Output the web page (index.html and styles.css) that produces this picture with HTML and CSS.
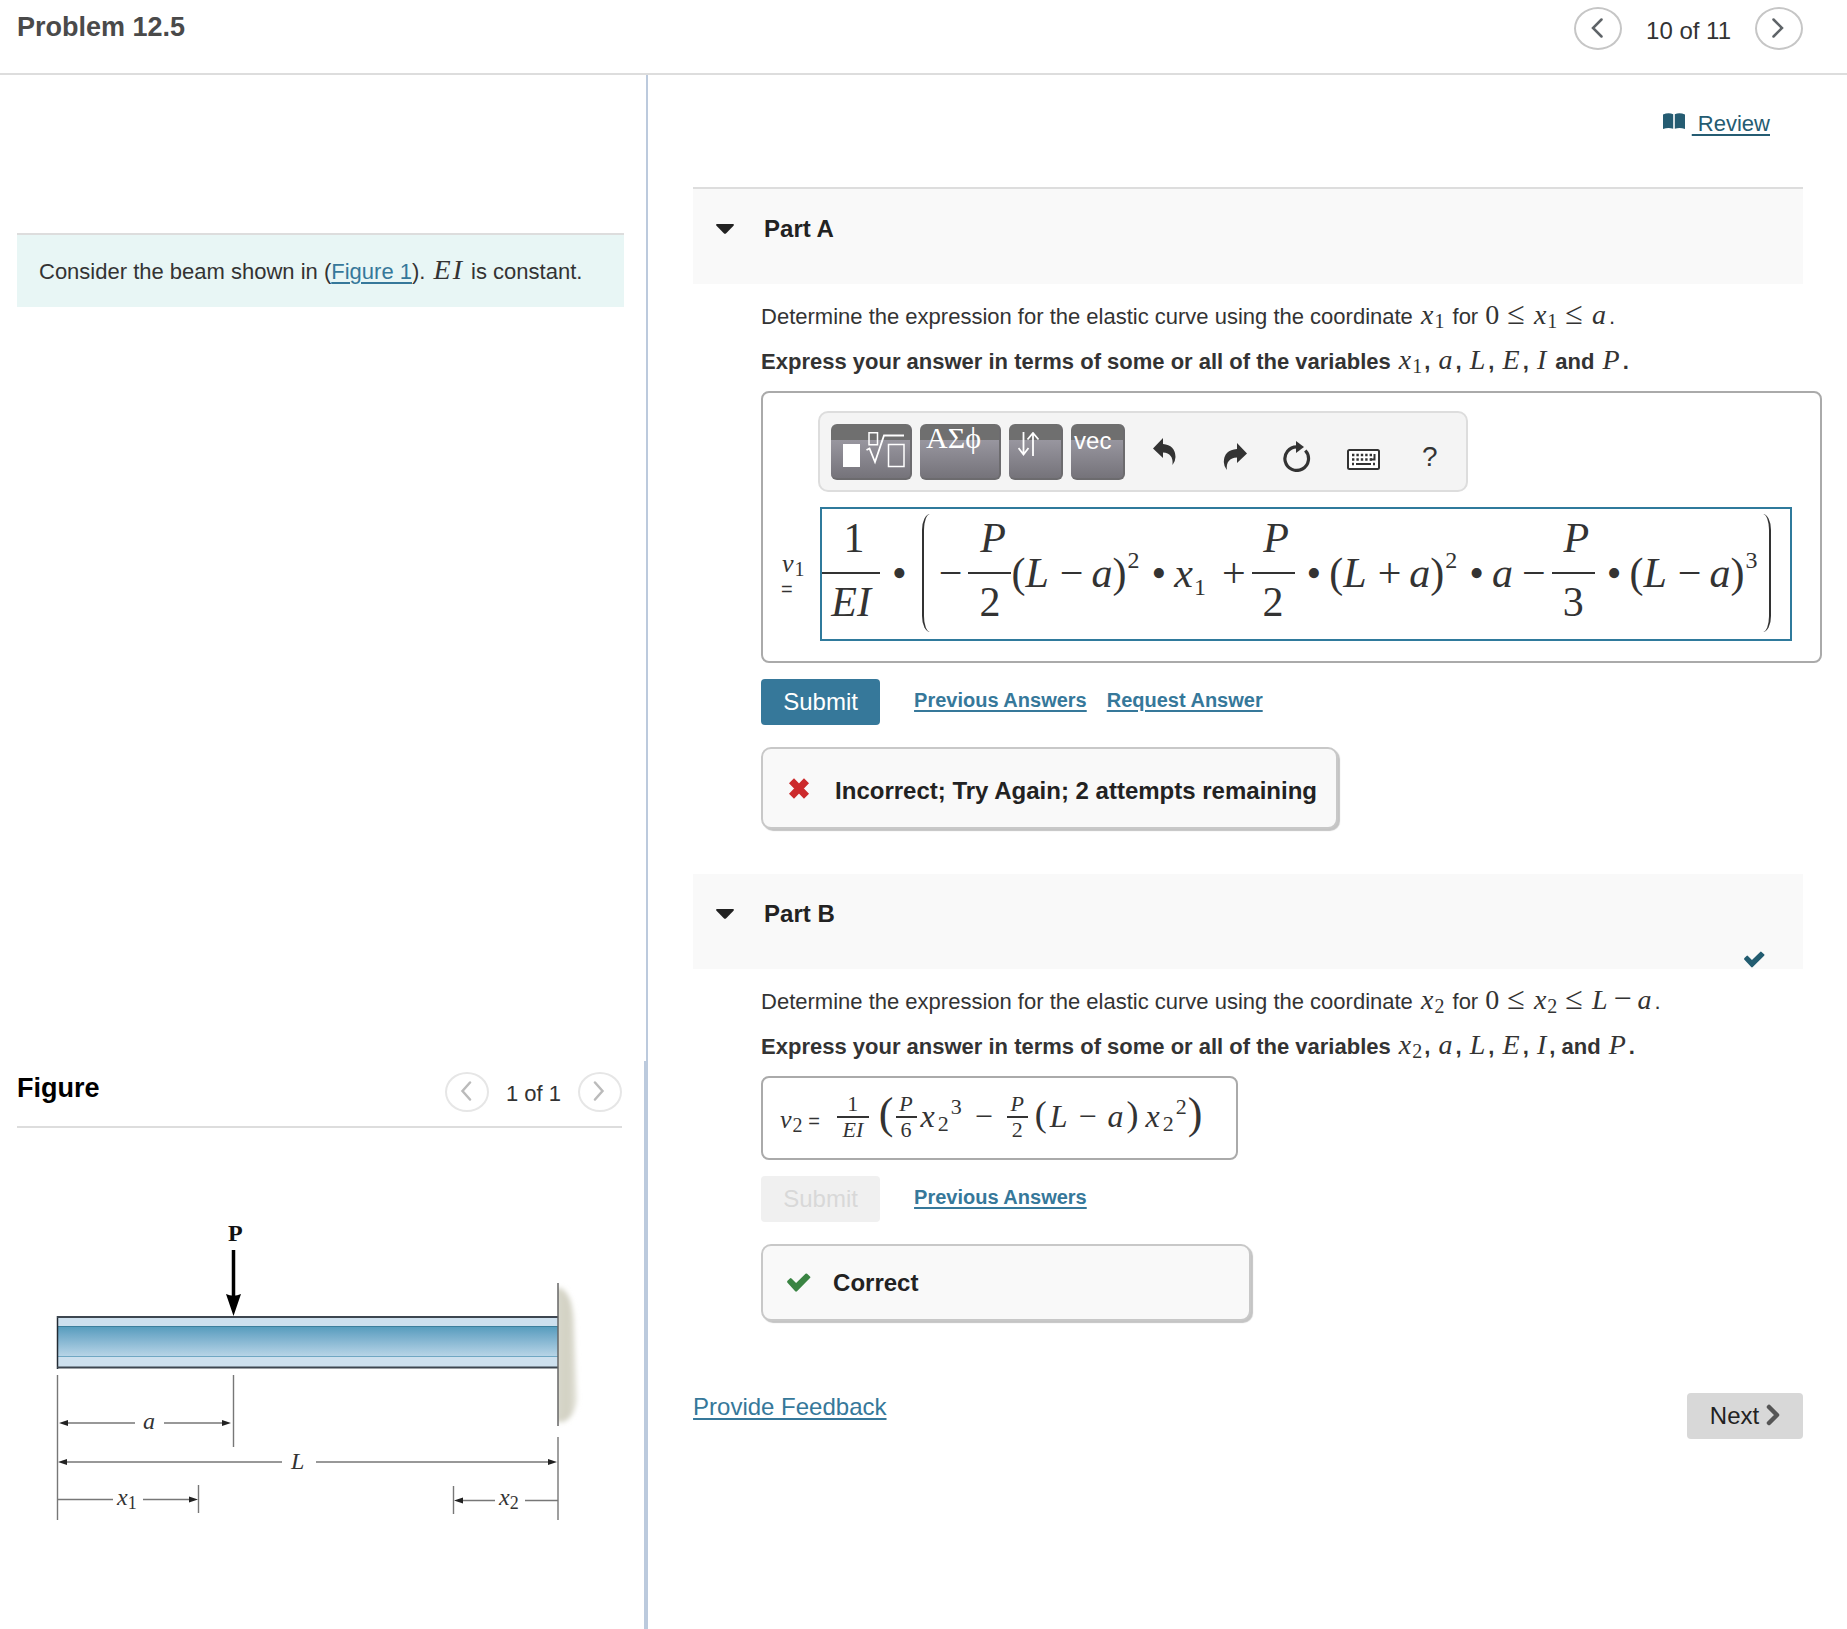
FILE: index.html
```html
<!DOCTYPE html>
<html lang="en">
<head>
<meta charset="utf-8">
<title>Problem 12.5</title>
<link rel="stylesheet" href="styles.css">
</head>
<body>
<header class="topbar">
  <h1 class="topbar-title">Problem 12.5</h1>
  <nav class="pager" aria-label="Problems">
    <button class="round" type="button" aria-label="Previous problem"><svg width="12" height="20" viewBox="0 0 12 20"><path d="M10.500 1.500L2 10l8.500 8.500" /></svg></button>
    <span class="pager-count">10 of 11</span>
    <button class="round" type="button" aria-label="Next problem"><svg width="12" height="20" viewBox="0 0 12 20"><path d="M1.500 1.500L10 10l-8.500 8.500" /></svg></button>
  </nav>
</header>

<div class="columns">
  <aside class="side">
    <section class="intro">
      <p class="intro-box">Consider the beam shown in (<a href="#figure">Figure 1</a>). <span class="m"><i>E</i><i>I</i></span> is constant.</p>
    </section>
    <section class="figure" id="figure">
      <div class="figure-head">
        <h2 class="figure-title">Figure</h2>
        <nav class="pager pager-small" aria-label="Figures">
          <button class="round" type="button" disabled aria-label="Previous figure"><svg width="12" height="20" viewBox="0 0 12 20"><path d="M10 1.500L2.500 10l7.500 8.500" /></svg></button>
          <span class="pager-count">1 of 1</span>
          <button class="round" type="button" disabled aria-label="Next figure"><svg width="12" height="20" viewBox="0 0 12 20"><path d="M2 1.500L9.500 10 2 18.500" /></svg></button>
        </nav>
      </div>
      <svg class="beam" width="605" height="340" viewBox="17 1200 605 340" role="img" aria-label="Beam fixed at its right end with load P">
        <defs>
          <linearGradient id="web" x1="0" y1="0" x2="0" y2="1"><stop offset="0" stop-color="#549bbb"/><stop offset=".25" stop-color="#6fa9c8"/><stop offset="1" stop-color="#bad6e8"/></linearGradient>
          <linearGradient id="wall" x1="0" y1="0" x2="1" y2="0"><stop offset="0" stop-color="#d9d8cc"/><stop offset=".6" stop-color="#d2d1c3"/><stop offset="1" stop-color="#e6e5dc"/></linearGradient>
          <filter id="soft" x="-40%" y="-10%" width="180%" height="120%"><feGaussianBlur stdDeviation="2.500"/></filter>
          <clipPath id="right"><rect x="558" y="1270" width="50" height="170"/></clipPath>
        </defs>
        <g clip-path="url(#right)"><path d="M555 1288h6q11 6 13 32l3 80q-2 16-13 22h-9z" fill="url(#wall)" filter="url(#soft)"/></g>
        <rect x="57" y="1317" width="501" height="51" fill="#cde0ee"/>
        <rect x="57" y="1326" width="501" height="31" fill="url(#web)"/>
        <path d="M57 1326.500h501" stroke="#3c7f9d"/>
        <path d="M57 1356.500h501" stroke="#6fa7c3"/>
        <path d="M57.500 1316v53" stroke="#222a33" stroke-width="1.500"/>
        <path d="M57 1317h501M57 1367.500h501" stroke="#3d4650" stroke-width="2"/>
        <path d="M558 1283v143" stroke="#666" stroke-width="1.500"/>
        <path d="M233.500 1250v50" stroke="#000" stroke-width="3.500"/>
        <path d="M226 1294q7.500 3.500 15 0l-7.500 22z"/>
        <g stroke="#777" stroke-width="1.400" fill="none">
          <path d="M57.500 1375v145M233.500 1375v72M558 1437v83M198.500 1485v28M453.500 1486v28"/>
          <path d="M62 1423h73M164 1423h64M62 1462h220M316 1462h238M57 1499.500h56M143 1499.500h50M458 1500.500h37M525 1500.500h33"/>
        </g>
        <path d="M59 1423l9-3v6zM231 1423l-9-3v6zM58 1462l9-3v6zM557 1462l-9-3v6zM198 1499.500l-9-3v6zM454 1500.500l9-3v6z" fill="#222"/>
        <g class="beam-text">
          <text x="228" y="1241" class="beam-load">P</text>
          <text x="143" y="1429">a</text>
          <text x="291" y="1469">L</text>
          <text x="117" y="1505">x<tspan class="beam-sub" dy="4">1</tspan></text>
          <text x="499" y="1505">x<tspan class="beam-sub" dy="4">2</tspan></text>
        </g>
      </svg>
    </section>
  </aside>

  <main class="work">
    <div class="review">
      <svg width="22" height="17" viewBox="0 0 22 17" aria-hidden="true"><path d="M0 1.500Q5.500-.8 10.200 1.200v14.600Q5.500 14 0 16zM22 1.500Q16.500-.8 11.800 1.200v14.600Q16.500 14 22 16z" fill="#255c72"/></svg>
      <a href="#review">&nbsp;Review</a>
    </div>

    <section>
      <h2 class="part-head part-first">
        <svg width="18" height="10" viewBox="0 0 18 10" aria-hidden="true"><path d="M1 0h16q1.500.5.500 1.700L10.200 9.300q-1.200 1-2.400 0L.5 1.700Q-.5.500 1 0z" fill="#222"/></svg>
        <span>Part A</span>
      </h2>
      <div class="part-body">
        <p>Determine the expression for the elastic curve using the coordinate <span class="m"><i>x</i><sub>1</sub></span> for <span class="m">0<b>≤</b><i>x</i><sub>1</sub><b>≤</b><i>a</i></span>.</p>
        <p class="strong">Express your answer in terms of some or all of the variables <span class="m"><i>x</i><sub>1</sub></span>, <span class="m"><i>a</i></span>, <span class="m"><i>L</i></span>, <span class="m"><i>E</i></span>, <span class="m"><i>I</i></span> and <span class="m"><i>P</i></span>.</p>

        <div class="editor">
          <div class="toolbar" role="toolbar" aria-label="Math tools">
            <button class="key key-wide" type="button" aria-label="Templates">
              <svg width="64" height="38" viewBox="0 0 64 38"><path d="M1 12h17v23H1z" fill="#fff"/><path d="M27 .8h8.500v12H27zM46.500 12.500h15.500v22H46.500z" fill="none" stroke="#fff" stroke-width="1.500"/><path d="M24.500 18l3-1.500 5.500 13.500 9-26.500h20" fill="none" stroke="#fff" stroke-width="1.800"/></svg>
            </button>
            <button class="key key-wide key-greek" type="button">ΑΣϕ</button>
            <button class="key" type="button" aria-label="Arrows">
              <svg width="24" height="26" viewBox="0 0 24 26" fill="none" stroke="#fff" stroke-width="1.800"><path d="M5.500 0v22M.5 16l5 6.500 5-6.500M15 24V1M9.500 7.500L15 1l5.500 6.500"/></svg>
            </button>
            <button class="key key-vec" type="button">vec</button>
            <div class="tools">
              <button class="tool tool-undo" type="button" aria-label="Undo"><svg width="24" height="28" viewBox="0 0 24 28"><path d="M0 10.500L10 0v6q12 1 12.500 13 0 4-3 8 1-12-9.500-12.500V20z" fill="#333"/></svg></button>
              <button class="tool" type="button" aria-label="Redo"><svg width="24" height="28" viewBox="0 0 24 28"><path d="M24 10.500L14 0v6Q1 7 .8 19q0 4 3 8-1-12 10.200-12.500V20z" fill="#333"/></svg></button>
              <button class="tool" type="button" aria-label="Reset"><svg width="28" height="31" viewBox="0 0 28 31"><path d="M22.300 9.500A11.800 11.800 0 1 1 14 5.800" fill="none" stroke="#333" stroke-width="3.200"/><path d="M13 0l8 6-8 6z" fill="#333"/></svg></button>
              <button class="tool tool-keys" type="button" aria-label="Keyboard"><svg width="33" height="21" viewBox="0 0 33 21"><rect x="1" y="1" width="31" height="19" rx="1.500" fill="#fff" stroke="#333" stroke-width="2"/><path d="M5 6h21M5 10.500h22M5 15h2M26 15h2" stroke="#333" stroke-width="2.500" stroke-dasharray="2.400 2"/><path d="M9 15h15M23 10.500h4.500V5" fill="none" stroke="#333" stroke-width="2"/></svg></button>
              <button class="tool tool-help" type="button">?</button>
            </div>
          </div>
          <div class="editor-label" id="v1"><span class="m"><i>v</i><sub>1</sub></span><br>=</div>
          <div class="field" role="textbox" tabindex="0" aria-labelledby="v1">
            <span class="frac frac-wide"><span>1</span><i>EI</i></span><span class="dot">•</span>
            <span class="fence"></span>
            <span class="op">−</span><span class="frac"><i>P</i><span>2</span></span>
            <span class="group">(<i>L</i><span class="op">−</span><i>a</i>)<sup>2</sup></span><span class="dot">•</span><i>x</i><sub>1</sub>
            <span class="op op-far">+</span><span class="frac"><i>P</i><span>2</span></span><span class="dot">•</span>
            <span class="group">(<i>L</i><span class="op">+</span><i>a</i>)<sup>2</sup></span><span class="dot">•</span><i>a</i>
            <span class="op">−</span><span class="frac"><i>P</i><span>3</span></span><span class="dot">•</span>
            <span class="group">(<i>L</i><span class="op">−</span><i>a</i>)<sup>3</sup></span>
            <span class="fence fence-end"></span>
          </div>
        </div>

        <div class="actions">
          <button class="submit" type="button">Submit</button>
          <div class="links"><a href="#answers-a">Previous Answers</a><a href="#request-a">Request Answer</a></div>
        </div>
        <div class="verdict verdict-bad">
          <svg width="24" height="23" viewBox="0 0 24 23" aria-hidden="true"><path d="M4.500 3.800l15 15.400M19.500 3.800l-15 15.400" stroke="#cc2a2c" stroke-width="7"/></svg>
          <span>Incorrect; Try Again; 2 attempts remaining</span>
        </div>
      </div>
    </section>

    <section>
      <h2 class="part-head">
        <svg width="18" height="10" viewBox="0 0 18 10" aria-hidden="true"><path d="M1 0h16q1.500.5.500 1.700L10.200 9.300q-1.200 1-2.400 0L.5 1.700Q-.5.500 1 0z" fill="#222"/></svg>
        <span>Part B</span>
        <svg class="part-done" width="21" height="17" viewBox="0 0 24 19" role="img" aria-label="Complete"><path d="M.5 7.800l2.400-2.400q.8-.8 1.600 0l4.600 4.600L18.500.8q.8-.8 1.600 0l2.900 2.700q.8.800 0 1.600L10 18.200q-.9.900-1.800 0L.5 9.800q-.8-1 0-2z" fill="#225c70"/></svg>
      </h2>
      <div class="part-body">
        <p>Determine the expression for the elastic curve using the coordinate <span class="m"><i>x</i><sub>2</sub></span> for <span class="m">0<b>≤</b><i>x</i><sub>2</sub><b>≤</b><i>L</i><b class="minus">−</b><i>a</i></span>.</p>
        <p class="strong">Express your answer in terms of some or all of the variables <span class="m"><i>x</i><sub>2</sub></span>, <span class="m"><i>a</i></span>, <span class="m"><i>L</i></span>, <span class="m"><i>E</i></span>, <span class="m"><i>I</i></span>, and <span class="m"><i>P</i></span>.</p>

        <div class="answer">
          <span class="answer-label"><span class="m"><i>v</i><sub>2</sub></span> =</span>
          <span class="frac frac-wide"><span>1</span><i>EI</i></span>
          <span class="tall">(</span><span class="frac"><i>P</i><span>6</span></span><i>x</i><sub>2</sub><sup>3</sup><span class="op op-far">−</span><span class="frac"><i>P</i><span>2</span></span>
          <span class="paren">(</span><i>L</i><span class="op">−</span><i>a</i><span class="paren paren-end">)</span><i>x</i><sub>2</sub><sup>2</sup><span class="tall">)</span>
        </div>

        <div class="actions">
          <button class="submit" type="button" disabled>Submit</button>
          <div class="links"><a href="#answers-b">Previous Answers</a></div>
        </div>
        <div class="verdict verdict-good">
          <svg width="24" height="19" viewBox="0 0 24 19" aria-hidden="true"><path d="M.5 7.800l2.400-2.400q.8-.8 1.600 0l4.600 4.600L18.500.8q.8-.8 1.600 0l2.900 2.700q.8.800 0 1.600L10 18.200q-.9.900-1.800 0L.5 9.800q-.8-1 0-2z" fill="#3a8443"/></svg>
          <span>Correct</span>
        </div>
      </div>
    </section>

    <div class="bottom">
      <a href="#feedback">Provide Feedback</a>
      <button class="next" type="button">Next <svg width="14" height="22" viewBox="0 0 14 22" aria-hidden="true"><path d="M3 3l8 8-8 8" fill="none" stroke="#555" stroke-width="4.500" stroke-linecap="round" stroke-linejoin="round"/></svg></button>
    </div>
  </main>
</div>
</body>
</html>
```
FILE: styles.css
```css
* { box-sizing: border-box; }

body {
  margin: 0;
  min-height: 100vh;
  display: flex;
  flex-direction: column;
  background: #fff;
  color: #333;
  font: 22px/30px "Liberation Sans", Arial, sans-serif;
}

h1, h2, p { margin: 0; }
a { color: #36789a; text-decoration-thickness: 2px; text-underline-offset: 3px; }
button { font: inherit; color: inherit; border: 0; margin: 0; padding: 0; background: none; }
svg { display: block; flex: none; }

/* Header */
.topbar {
  display: flex;
  justify-content: space-between;
  align-items: flex-start;
  min-height: 75px;
  padding: 7px 44px 0 17px;
  border-bottom: 2px solid #ddd;
}
.topbar-title { padding-top: 4px; font-size: 27px; line-height: 32px; color: #4a4a4a; }

.pager { display: flex; align-items: center; gap: 24px; font-size: 24px; line-height: 28px; }
.pager-count { padding-top: 4px; }
.round {
  display: flex;
  align-items: center;
  justify-content: center;
  width: 48px;
  height: 43px;
  padding: 0 2px 2px 0;
  border: 2px solid #c6c6c6;
  border-radius: 50%;
}
.round path { fill: none; stroke: #5f6468; stroke-width: 2.5; stroke-linecap: round; }
.pager-small { gap: 17px; font-size: 22px; }
.pager-small .round { width: 44px; height: 40px; border-color: #e6e6e6; }
.pager-small .round path { stroke: #bbb; }

/* Columns */
.columns { flex: 1; display: grid; grid-template-columns: minmax(0, 20fr) minmax(0, 37fr); }
.side { display: flex; flex-direction: column; border-right: 2px solid #bccadd; }
.intro { flex: 1; padding: 158px 22px 0 17px; }
.intro-box { padding: 22px 22px 20px; background: #e8f6f5; border-top: 2px solid #ddd; }

.figure { padding: 11px 22px 89px 17px; border-right: 2px solid #bccadd; }
.figure-head {
  display: flex;
  justify-content: space-between;
  align-items: flex-start;
  height: 56px;
  border-bottom: 2px solid #ddd;
}
.figure-title { font-size: 27px; line-height: 32px; color: #000; }
.beam { max-width: 100%; margin-top: 72px; }
.beam-text { font: italic 24px "Liberation Serif", "Times New Roman", serif; fill: #333; }
.beam-load { font-weight: bold; font-style: normal; fill: #111; }
.beam-sub { font-size: 18px; font-style: normal; }

.work { padding: 0 44px 40px 45px; }
.review { display: flex; justify-content: flex-end; gap: 7px; height: 112px; padding: 35px 33px 0 0; line-height: 28px; }
.review svg { margin-top: 3px; }
.review a { color: #255c72; }

/* Parts */
.part-head {
  display: flex;
  gap: 30px;
  min-height: 95px;
  padding: 26px 38px 0 23px;
  background: #f9f9f9;
  color: #222;
  font-size: 24px;
  line-height: 28px;
}
.part-head svg { margin-top: 9px; }
.part-head .part-done { align-self: flex-end; margin: 0 0 1px auto; }
.part-first { min-height: 97px; border-top: 2px solid #ddd; }
.part-body { padding: 18px 0 45px 68px; }
.part-body p { margin-bottom: 15px; }
.part-body .strong { margin-bottom: 14px; font-weight: bold; }

/* Inline math */
.m { padding: 0 2px 0 1px; font: 28px/1 "Liberation Serif", "Times New Roman", serif; line-height: 0; white-space: nowrap; }
.m i { padding: 0 1px; }
.m sub { font-size: 20px; line-height: 0; vertical-align: -4px; }
.m b { font-weight: normal; font-size: 32px; line-height: 0; padding: 0 8px; }
.m .minus { padding: 0 5px; }

/* Answer editor */
.editor {
  display: grid;
  grid-template-columns: 37px 1fr;
  row-gap: 15px;
  margin-right: -19px;
  padding: 18px 28px 20px 18px;
  border: 2px solid #aaa;
  border-radius: 8px;
}
.toolbar {
  grid-column: 2;
  justify-self: start;
  display: flex;
  gap: 8px;
  width: 650px;
  height: 81px;
  padding: 11px;
  background: #f4f4f4;
  border: 2px solid #ddd;
  border-radius: 10px;
}
.key {
  display: flex;
  align-items: flex-start;
  width: 54px;
  height: 56px;
  padding: 8px 0 0 9px;
  border: solid #6c6b6e;
  border-width: 0 2px 2px 0;
  border-radius: 6px;
  color: #fff;
  background: linear-gradient(#6f6f6f 16px, #98969f 16px, #75737a);
}
.key-wide { width: 81px; }
.key-wide svg { margin-left: 2px; }
.key-greek { padding: 0 0 0 6px; font: 30px/28px "Liberation Serif", serif; }
.key-vec { padding: 3px 0 0 3px; font-size: 24px; line-height: 28px; }
.tools { display: flex; gap: 36px; align-items: center; padding: 10px 0 0 20px; }
.tool-undo { margin: 0 10px 10px 0; }
.tool-keys { padding-top: 6px; }
.tool-help { margin-left: 6px; font-size: 28px; }

.editor-label { align-self: center; padding-top: 6px; font-size: 20px; line-height: 24px; }
.editor-label .m, .answer-label .m { padding: 0; font-size: 26px; }
.field, .answer { display: flex; align-items: center; font-family: "Liberation Serif", "Times New Roman", serif; }
.field {
  height: 134px;
  margin-left: 2px;
  padding-bottom: 2px;
  border: 2px solid #2f7a9c;
  font-size: 42px;
  line-height: 48px;
}
.field sup, .field sub { margin-left: 1px; font-size: 24px; line-height: 28px; }
.field sup { margin-bottom: 26px; }
.field sub { margin-top: 28px; }
.group { display: flex; align-items: center; }
.dot { margin: 0 8px 0 12px; }
.op { margin: 0 6px 0 9px; }
.group .op { margin: 0 8px 0 11px; }
.op-far { margin-left: 16px; }
.frac { display: grid; justify-items: center; width: 43px; }
.frac > :first-child { justify-self: stretch; text-align: center; border-bottom: 2px solid #333; }
.field .frac > :first-child { padding: 5px 0 10px 6px; }
.field .frac > :last-child { padding: 4px 0 11px; }
.field .frac-wide { width: 58px; }
.fence {
  width: 8px;
  height: 118px;
  margin-left: 7px;
  border-left: 2px solid #333;
  border-radius: 8px 0 0 8px / 16px 0 0 16px;
}
.fence-end { margin-left: 5px; border-left: 0; border-right: 2px solid #333; border-radius: 0 8px 8px 0 / 0 16px 16px 0; }

/* Read-only answer */
.answer {
  width: 477px;
  height: 84px;
  padding: 0 18px 4px 16px;
  border: 2px solid #aaa;
  border-radius: 8px;
  font-size: 32px;
  line-height: 40px;
}
.answer-label { padding-top: 10px; margin-right: 17px; font: 20px/30px "Liberation Sans", Arial, sans-serif; }
.answer > i { padding: 0 2px; }
.answer > sup, .answer > sub { font-size: 22px; line-height: 24px; margin: 0 1px; }
.answer > sup { margin-bottom: 18px; }
.answer > sub { margin-top: 16px; }
.answer .frac { width: 21px; margin: 2px 2px 0; font-size: 22px; line-height: 24px; }
.answer .frac-wide { width: 32px; margin: 2px 10px 0 0; }
.answer .op { margin: 0 9px; }
.answer .op-far { margin: 0 12px; }
.tall { font-size: 44px; margin-bottom: 4px; }
.paren { font-size: 36px; margin: 0 1px 4px 5px; }
.paren-end { margin: 0 5px 4px 1px; }

/* Actions and verdicts */
.actions { display: flex; align-items: center; gap: 34px; margin: 16px 0 22px; }
.submit { width: 119px; height: 46px; border-radius: 4px; background: #36789a; color: #fff; font-size: 24px; }
.submit:disabled { background: #f0f0f0; color: #d8d8d8; }
.links { display: flex; gap: 20px; padding-bottom: 5px; font-size: 20px; font-weight: bold; }
.verdict {
  display: flex;
  align-items: center;
  gap: 24px;
  padding: 0 16px 0 24px;
  border: 2px solid #c8c8c8;
  border-radius: 10px;
  background: #f9f9f9;
  box-shadow: 2px 2px 1px #c4c4c4;
  color: #222;
  font-size: 24px;
  font-weight: bold;
}
.verdict-bad { width: 577px; height: 82px; }
.verdict-bad span { padding-top: 5px; }
.verdict-good { width: 490px; height: 77px; gap: 22px; }

.bottom { display: flex; justify-content: space-between; align-items: flex-start; margin-top: 27px; font-size: 24px; line-height: 28px; }
.next {
  display: flex;
  align-items: center;
  justify-content: center;
  gap: 7px;
  width: 116px;
  height: 46px;
  border-radius: 4px;
  background: #d8d8d8;
  color: #222;
}
.next svg { margin-bottom: 3px; }
```
